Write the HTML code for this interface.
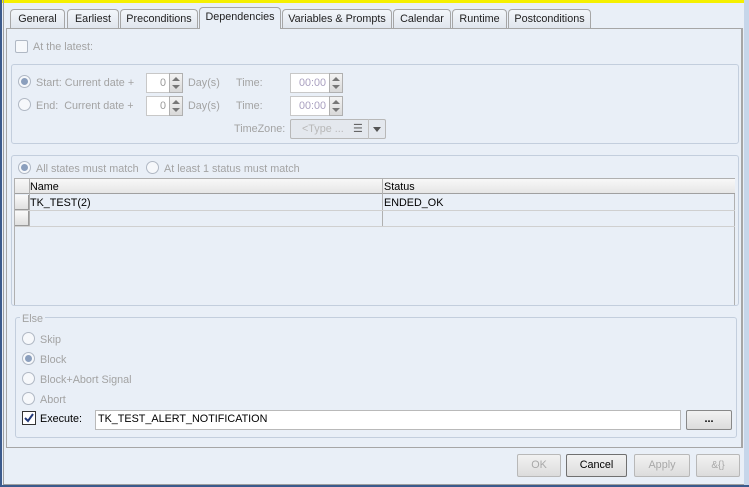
<!DOCTYPE html>
<html><head><style>
*{box-sizing:border-box;margin:0;padding:0}
body{width:749px;height:487px;background:#e9eff7;font-family:"Liberation Sans",sans-serif;font-size:10.8px;color:#000;position:relative;overflow:hidden}
.a{position:absolute}
.t{margin-top:2px}
.dis{color:#a3a3a3}
.tab{position:absolute;top:9px;height:20px;border:1px solid #a6a6a6;border-bottom:none;border-radius:4px 4px 0 0;background:linear-gradient(#f3f6fa,#dfe5ed);text-align:center;line-height:19px;color:#222}
.tab.act{top:7px;height:22px;background:#e9eff7;z-index:2;line-height:19px}
.grp{position:absolute;border:1px solid #c3cedd;border-radius:3px}
.rad{position:absolute;width:13px;height:13px;border:1px solid #b0b8c4;border-radius:50%;background:#f6f8fb}
.rad.on::after{content:"";position:absolute;left:2px;top:2px;width:7px;height:7px;border-radius:50%;background:#8b9fbd}
.box{position:absolute;background:#fff;border:1px solid #b9b9b9}
.spin{position:absolute;width:14px;border:1px solid #b0b0b0;background:linear-gradient(#f3f3f3,#d9d9d9)}
.spin::before{content:"";position:absolute;left:2px;top:3px;border-left:4px solid transparent;border-right:4px solid transparent;border-bottom:4px solid #777}
.spin::after{content:"";position:absolute;left:2px;top:11px;border-left:4px solid transparent;border-right:4px solid transparent;border-top:4px solid #777}
.btn{position:absolute;height:23px;border:1px solid #b8b8b8;border-radius:2px;background:linear-gradient(#f2f2f2,#dcdcdc);text-align:center;line-height:21px;color:#a8a8a8}
</style></head><body>
<div class="a" style="left:0;top:0;width:749px;height:3px;background:#f5f000"></div>
<div class="a" style="left:0;top:0;width:2px;height:487px;background:#3b5a8c"></div>
<div class="a" style="left:744px;top:0;width:5px;height:487px;background:#c6d6ea"></div>
<div class="a" style="left:0;top:485px;width:749px;height:2px;background:#3b5a8c"></div>
<div class="a" style="left:3px;top:0;width:741px;height:485px;border-left:1px solid #a0a0a0;border-bottom:1px solid #a0a0a0"></div>

<div class="tab" style="left:10px;width:55px">General</div>
<div class="tab" style="left:67px;width:52px">Earliest</div>
<div class="tab" style="left:120px;width:78px">Preconditions</div>
<div class="tab act" style="left:199px;width:82px">Dependencies</div>
<div class="tab" style="left:282px;width:110px">Variables &amp; Prompts</div>
<div class="tab" style="left:393px;width:58px">Calendar</div>
<div class="tab" style="left:452px;width:55px">Runtime</div>
<div class="tab" style="left:508px;width:83px">Postconditions</div>
<div class="a" style="left:6px;top:28px;width:737px;height:420px;border:1px solid #a6a6a6;border-right:2px solid #a6a6a6"></div>

<div class="a" style="left:15px;top:40px;width:13px;height:13px;border:1px solid #b0b8c4;background:#f6f8fb;border-radius:2px"></div>
<div class="a dis t" style="left:33px;top:39px">At the latest:</div>

<div class="grp" style="left:11px;top:64px;width:728px;height:80px"></div>
<div class="rad on" style="left:18px;top:75px"></div>
<div class="a dis t" style="left:36px;top:75px">Start: Current date +</div>
<div class="box" style="left:146px;top:73px;width:24px;height:20px;border-color:#c8c8c8;text-align:right;padding-right:3px;line-height:18px;color:#999">0</div>
<div class="spin" style="left:169px;top:73px;height:20px"></div>
<div class="a dis t" style="left:188px;top:75px">Day(s)</div>
<div class="a dis t" style="left:236px;top:75px">Time:</div>
<div class="box" style="left:290px;top:73px;width:40px;height:20px;border-color:#c8c8c8;text-align:right;padding-right:3px;line-height:18px;color:#a9a0c0">00:00</div>
<div class="spin" style="left:329px;top:73px;height:20px"></div>

<div class="rad" style="left:18px;top:98px"></div>
<div class="a dis t" style="left:36px;top:98px">End:&nbsp; Current date +</div>
<div class="box" style="left:146px;top:96px;width:24px;height:20px;border-color:#c8c8c8;text-align:right;padding-right:3px;line-height:18px;color:#999">0</div>
<div class="spin" style="left:169px;top:96px;height:20px"></div>
<div class="a dis t" style="left:188px;top:98px">Day(s)</div>
<div class="a dis t" style="left:236px;top:98px">Time:</div>
<div class="box" style="left:290px;top:96px;width:40px;height:20px;border-color:#c8c8c8;text-align:right;padding-right:3px;line-height:18px;color:#a9a0c0">00:00</div>
<div class="spin" style="left:329px;top:96px;height:20px"></div>

<div class="a dis t" style="left:234px;top:121px">TimeZone:</div>
<div class="a" style="left:290px;top:119px;width:96px;height:20px;border:1px solid #b8b8b8;background:#e4e8ee;border-radius:2px"></div>
<div class="a dis t" style="left:302px;top:121px;color:#b8b8b8">&lt;Type ...</div>
<div class="a" style="left:353px;top:122px;font-size:11px;color:#666">☰</div>
<div class="a" style="left:368px;top:119px;width:1px;height:20px;background:#c0c0c0"></div>
<div class="a" style="left:373px;top:127px;width:0;height:0;border-left:4px solid transparent;border-right:4px solid transparent;border-top:5px solid #555"></div>

<div class="grp" style="left:11px;top:155px;width:728px;height:151px"></div>
<div class="rad on" style="left:18px;top:161px"></div>
<div class="a dis t" style="left:36px;top:161px">All states must match</div>
<div class="rad" style="left:146px;top:161px"></div>
<div class="a dis t" style="left:164px;top:161px">At least 1 status must match</div>

<div class="a" style="left:14px;top:178px;width:721px;height:127px;border:1px solid #b0b0b0;border-bottom:none"></div>
<div class="a" style="left:15px;top:179px;width:720px;height:15px;background:linear-gradient(#f8f8f8,#e6e6e6);border-bottom:1px solid #a0a0a0"></div>
<div class="a" style="left:29px;top:179px;width:1px;height:48px;background:#b0b0b0"></div>
<div class="a" style="left:382px;top:179px;width:1px;height:48px;background:#b0b0b0"></div>
<div class="a t" style="left:30px;top:179px">Name</div>
<div class="a t" style="left:384px;top:179px">Status</div>
<div class="a" style="left:15px;top:210px;width:720px;height:1px;background:#d0d0d0"></div>
<div class="a" style="left:15px;top:226px;width:720px;height:1px;background:#d0d0d0"></div>
<div class="a" style="left:15px;top:195px;width:14px;height:15px;background:linear-gradient(#fafafa,#e0e0e0);border-right:1px solid #999;border-bottom:1px solid #999"></div>
<div class="a" style="left:15px;top:211px;width:14px;height:15px;background:linear-gradient(#fafafa,#e0e0e0);border-right:1px solid #999;border-bottom:1px solid #999"></div>
<div class="a t" style="left:30px;top:195px">TK_TEST(2)</div>
<div class="a t" style="left:384px;top:195px">ENDED_OK</div>

<div class="grp" style="left:15px;top:317px;width:722px;height:121px"></div>
<div class="a dis t" style="left:20px;top:311px;background:#e9eff7;padding:0 2px">Else</div>
<div class="rad" style="left:22px;top:332px"></div><div class="a dis t" style="left:40px;top:332px">Skip</div>
<div class="rad on" style="left:22px;top:352px"></div><div class="a dis t" style="left:40px;top:352px">Block</div>
<div class="rad" style="left:22px;top:372px"></div><div class="a dis t" style="left:40px;top:372px">Block+Abort Signal</div>
<div class="rad" style="left:22px;top:392px"></div><div class="a dis t" style="left:40px;top:392px">Abort</div>
<div class="a" style="left:22px;top:411px;width:14px;height:14px;border:1px solid #333;background:#fff">
<svg width="12" height="12" style="position:absolute;left:0;top:0"><path d="M2 6 L5 9 L10 2" stroke="#233a7a" stroke-width="2" fill="none"/></svg></div>
<div class="a t" style="left:40px;top:411px">Execute:</div>
<div class="box" style="left:95px;top:410px;width:586px;height:20px;padding-left:2px;line-height:16px">TK_TEST_ALERT_NOTIFICATION</div>
<div class="btn" style="left:686px;top:410px;width:46px;height:20px;border-color:#888;color:#000;font-weight:bold;line-height:16px">...</div>

<div class="btn" style="left:517px;top:454px;width:44px">OK</div>
<div class="btn" style="left:566px;top:454px;width:61px;border-color:#707070;color:#000">Cancel</div>
<div class="btn" style="left:634px;top:454px;width:56px">Apply</div>
<div class="btn" style="left:696px;top:454px;width:44px;font-size:10px">&amp;{}</div>
</body></html>
